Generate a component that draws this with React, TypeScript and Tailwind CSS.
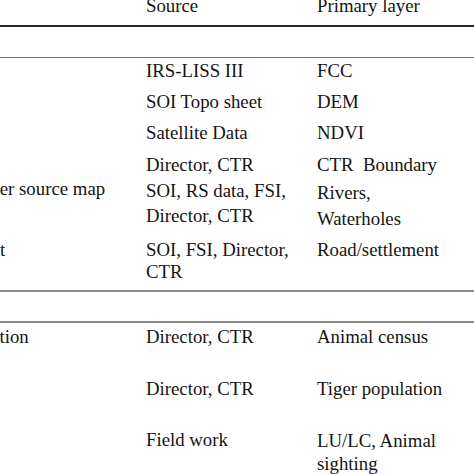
import React from "react";

const C1 = "w-[176px] shrink-0 whitespace-pre overflow-visible";
const C2 = "w-[171px] shrink-0 whitespace-pre";
const C3 = "flex-1 whitespace-pre";

function Row({
  h,
  c1,
  c2,
  c3,
  lead2 = "leading-[22px]",
  lead3 = "leading-[22px]",
  pt3 = "pt-0",
  c1cls = "",
}: {
  h: string;
  c1?: React.ReactNode;
  c2?: React.ReactNode;
  c3?: React.ReactNode;
  lead2?: string;
  lead3?: string;
  pt3?: string;
  c1cls?: string;
}) {
  return (
    <div className={`flex ${h}`}>
      <div className={`${C1} leading-[22px]`}>
        <div className={c1cls}>{c1}</div>
      </div>
      <div className={`${C2} ${lead2}`}>{c2}</div>
      <div className={`${C3} ${lead3} ${pt3}`}>{c3}</div>
    </div>
  );
}

export default function App() {
  return (
    <div className="w-[474px] h-[474px] overflow-hidden bg-white text-[18.8px] text-[#141414] font-['Liberation_Serif',serif]">
      <div className="-ml-[30px] -mt-[5px] w-[520px]">
        {/* header */}
        <Row h="h-[30px]" c2="Source" c3="Primary layer" />
        <div className="h-[2px] bg-[#2a2a2a]" />
        <div className="h-[30px]" />
        <div className="h-[1px] bg-[#777777]" />

        <div className="pt-[2px]">
          <Row h="h-[31px]" c2="IRS-LISS III" c3="FCC" />
          <Row h="h-[31px]" c2="SOI Topo sheet" c3="DEM" />
          <Row h="h-[32px]" c2="Satellite Data" c3="NDVI" />
          <Row h="h-[24px]" c2="Director, CTR" c3="CTR  Boundary" />
          <Row
            h="h-[61px]"
            c1="Water source map"
            lead2="leading-[25px]"
            lead3="leading-[26px]"
            pt3="pt-[2px]"
            c2={
              <>
                <div>SOI, RS data, FSI,</div>
                <div>Director, CTR</div>
              </>
            }
            c3={
              <>
                <div>Rivers,</div>
                <div>Waterholes</div>
              </>
            }
          />
          <Row
            h="h-[51px]"
            c1="Settlement"
            c1cls="-ml-[45px]"
            c2={
              <>
                <div>SOI, FSI, Director,</div>
                <div>CTR</div>
              </>
            }
            c3="Road/settlement"
          />
        </div>
        <div className="h-[2px] bg-[#8a8a8a]" />
        <div className="h-[29px]" />
        <div className="h-[2px] bg-[#8a8a8a]" />

        <div className="pt-[3px]">
          <Row
            h="h-[52px]"
            c1="Location"
            c1cls="-ml-[8px]"
            c2="Director, CTR"
            c3="Animal census"
          />
          <Row h="h-[51px]" c2="Director, CTR" c3="Tiger population" />
          <Row
            h="h-[60px]"
            c2="Field work"
            lead3="leading-[23px]"
            c3={
              <>
                <div>LU/LC, Animal</div>
                <div>sighting</div>
              </>
            }
          />
        </div>
      </div>
    </div>
  );
}
